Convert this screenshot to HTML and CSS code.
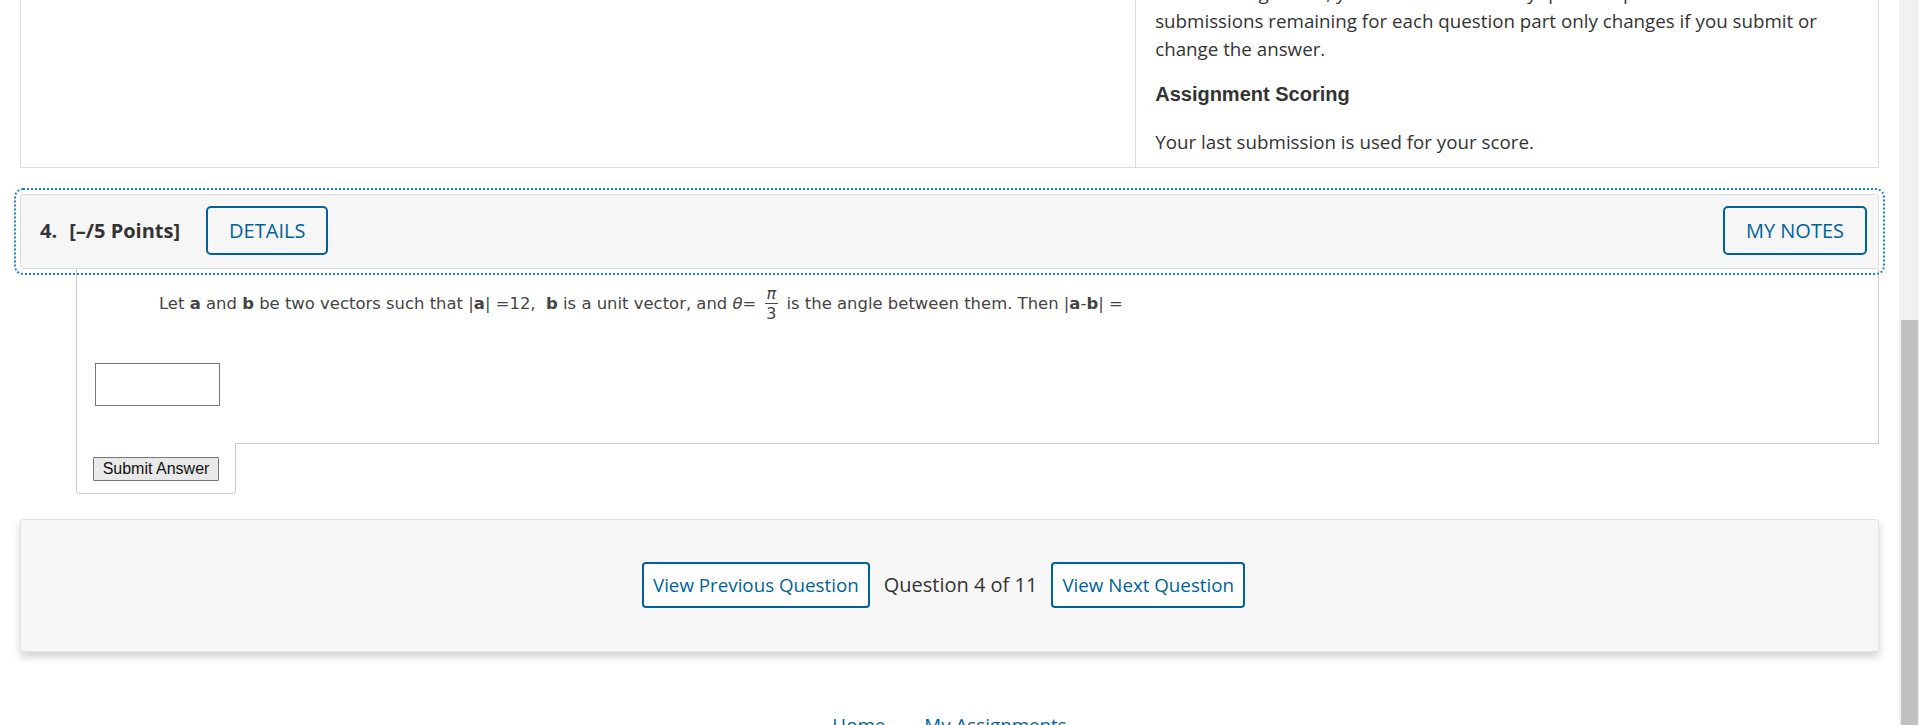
FILE: index.html
```html
<!DOCTYPE html>
<html lang="en">
<head>
<meta charset="utf-8">
<title>Question 4</title>
<link rel="stylesheet" href="styles.css">
</head>
<body>
<div class="viewport">
  <main class="page">
    <section class="top-panel">
      <div class="top-left"></div>
      <div class="top-right">
        <p class="rules">For this assignment, you submit answers by question part. The number of submissions remaining for each question part only changes if you submit or change the answer.</p>
        <h4 class="scoring-title">Assignment Scoring</h4>
        <p class="scoring">Your last submission is used for your score.</p>
      </div>
    </section>

    <section class="question">
      <header class="q-head">
        <div class="q-title"><span class="q-num">4.</span><span class="q-points">[&ndash;/5 Points]</span></div>
        <button class="btn-outline details" type="button">DETAILS</button>
        <span class="spacer"></span>
        <button class="btn-outline" type="button">MY NOTES</button>
      </header>
      <div class="q-body">
        <p class="q-text">Let <b>a</b> and <b>b</b> be two vectors such that |<b>a</b>| =12,&nbsp; <b>b</b> is a unit vector, and <i>&theta;</i>= <span class="frac"><span class="num"><i>&pi;</i></span><span class="den">3</span></span> is the angle between them. Then |<b>a</b>-<b>b</b>| =</p>
        <input class="answer" type="text" aria-label="answer">
      </div>
      <div class="q-foot">
        <div class="submit-box"><button class="submit" type="button">Submit Answer</button></div>
        <div class="foot-fill"></div>
      </div>
    </section>

    <nav class="q-nav">
      <a class="nav-btn" href="#">View Previous Question</a>
      <span class="q-count">Question 4 of 11</span>
      <a class="nav-btn" href="#">View Next Question</a>
    </nav>

    <footer class="footer">
      <a href="#">Home</a>
      <a href="#">My Assignments</a>
    </footer>
  </main>
  <div class="scrollbar"><div class="thumb"></div></div>
</div>
</body>
</html>
```

FILE: styles.css
```css
* { box-sizing: border-box; }

html, body {
  margin: 0;
  padding: 0;
  background: #fff;
}

body {
  font-family: "Open Sans", "Liberation Sans", sans-serif;
  font-size: 18.75px;
  line-height: 1.5;
  color: #333;
}

.viewport {
  display: flex;
  height: 725px;
  overflow: hidden;
}

.page {
  flex: 1;
  min-width: 0;
  padding: 0 20px;
}

/* top panel (scrolled partly out of view) */
.top-panel {
  margin-top: -22px;
  display: grid;
  grid-template-columns: 60% 40%;
  border: 1px solid #ddd;
}

.top-right {
  border-left: 1px solid #ddd;
  padding: 0 19px 10px 19px;
}

.rules, .scoring {
  margin: 0;
}

.scoring-title {
  margin: 20px 0 22px;
  font-family: "Liberation Sans", Arial, sans-serif;
  font-size: 20px;
  line-height: 23px;
  font-weight: 700;
  color: #333;
}

/* question */
.question {
  margin-top: 26px;
}

.q-head {
  display: flex;
  align-items: center;
  height: 75px;
  padding: 0 11px 0 19px;
  background: #f6f6f6;
  border: 1px solid #ddd;
  border-radius: 3px;
  outline: 2px dotted #1a7fdc;
  outline-offset: 4px;
}

.q-title {
  font-size: 20px;
  font-weight: 700;
  color: #333;
  white-space: nowrap;
}

.q-points {
  margin-left: 12px;
}

.spacer { flex: 1; }

.btn-outline {
  height: 49px;
  padding: 0 21px;
  font-family: "Open Sans", "Liberation Sans", sans-serif;
  font-size: 20px;
  font-weight: 400;
  color: #00629b;
  background: transparent;
  border: 2px solid #00629b;
  border-radius: 5px;
  margin-top: -1px;
}

.details {
  margin-left: 26px;
}

.q-body {
  margin-left: 56px;
  border-left: 1px solid #ccc;
  border-right: 1px solid #ccc;
  padding: 17.5px 20px 37px 18px;
}

.q-text {
  margin: 0 0 0 64px;
  font-family: "DejaVu Sans", Verdana, sans-serif;
  font-size: 16.45px;
  line-height: 19px;
  color: #444;
}

.frac {
  display: inline-flex;
  flex-direction: column;
  align-items: center;
  vertical-align: middle;
  margin: 0 3px;
  font-size: 16px;
  line-height: 16px;
}

.frac .num {
  padding: 0 2px 1px;
  border-bottom: 1px solid #444;
}

.frac .den {
  padding-top: 2px;
}

.answer {
  display: block;
  margin-top: 41px;
  width: 125px;
  height: 43px;
  border: 1px solid #767676;
  background: #fff;
  padding: 0 4px;
}

.q-foot {
  display: flex;
  margin-left: 56px;
}

.submit-box {
  border: 1px solid #ccc;
  border-top: none;
  border-radius: 0 0 4px 4px;
  padding: 14px 16px 12px;
}

.submit {
  display: block;
  height: 24px;
  width: 126px;
  padding: 0;
  font-family: "Liberation Sans", Arial, sans-serif;
  font-size: 16px;
  color: #111;
  background: #e9e9e9;
  border: 1px solid #767676;
  border-radius: 1px;
}

.foot-fill {
  flex: 1;
  height: 0;
  border-top: 1px solid #ccc;
}

/* navigation */
.q-nav {
  margin-top: 25px;
  display: flex;
  justify-content: center;
  align-items: center;
  gap: 14px;
  padding: 42px 12px 43px 0;
  background: #f7f7f7;
  border: 1px solid #e3e3e3;
  border-radius: 3px;
  box-shadow: 0 5px 8px rgba(0, 0, 0, 0.18);
}

.nav-btn {
  display: block;
  padding: 8px 9px;
  line-height: 26px;
  font-size: 18.75px;
  color: #00629b;
  background: #fff;
  border: 2px solid #00629b;
  border-radius: 4px;
  text-decoration: none;
}

.q-count {
  font-size: 20px;
  color: #333;
}

.footer {
  margin-top: 59px;
  display: flex;
  justify-content: center;
  gap: 39px;
  line-height: 28px;
}

.footer a {
  color: #00629b;
  text-decoration: none;
}

/* scrollbar */
.scrollbar {
  width: 20px;
  flex: none;
  background: #f1f1f1;
  display: flex;
  flex-direction: column;
  padding: 320px 1px 0 2px;
}

.thumb {
  flex: 1;
  background: #c1c1c1;
}
```
